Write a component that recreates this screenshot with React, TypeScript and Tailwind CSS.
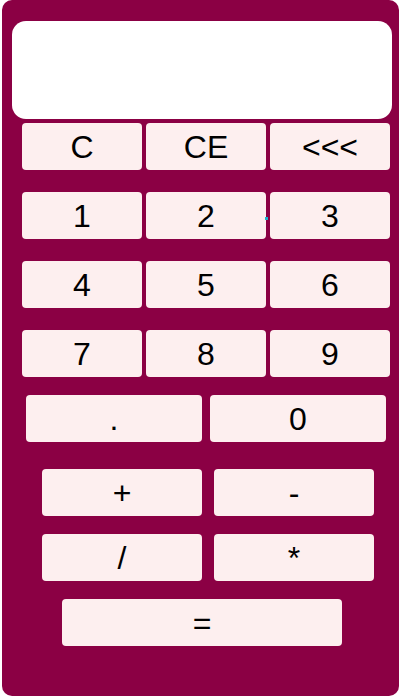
const rows: { keys: string[]; w: string; gap: string; ml: string; mt: string }[] = [
  { keys: ["C", "CE", "<<<"], w: "w-[120px]", gap: "gap-[4px]", ml: "ml-[20px]", mt: "mt-[4px]" },
  { keys: ["1", "2", "3"], w: "w-[120px]", gap: "gap-[4px]", ml: "ml-[20px]", mt: "mt-[22px]" },
  { keys: ["4", "5", "6"], w: "w-[120px]", gap: "gap-[4px]", ml: "ml-[20px]", mt: "mt-[22px]" },
  { keys: ["7", "8", "9"], w: "w-[120px]", gap: "gap-[4px]", ml: "ml-[20px]", mt: "mt-[22px]" },
  { keys: [".", "0"], w: "w-[176px]", gap: "gap-[8px]", ml: "ml-[24px]", mt: "mt-[18px]" },
  { keys: ["+", "-"], w: "w-[160px]", gap: "gap-[12px]", ml: "ml-[40px]", mt: "mt-[27px]" },
  { keys: ["/", "*"], w: "w-[160px]", gap: "gap-[12px]", ml: "ml-[40px]", mt: "mt-[18px]" },
  { keys: ["="], w: "w-[280px]", gap: "gap-0", ml: "ml-[60px]", mt: "mt-[18px]" },
];

export default function App() {
  return (
    <div className="w-[400px] h-[697px] bg-white font-['Liberation_Sans',Arial,sans-serif]">
      <div className="relative ml-[2px] w-[397px] h-[696px] rounded-[10px] bg-[#8b0044] flex flex-col">
        <div className="mt-[21px] ml-[10px] w-[380px] h-[98px] rounded-[14px] bg-white" />
        {rows.map((row, i) => (
          <div key={i} className={`flex ${row.gap} ${row.ml} ${row.mt}`}>
            {row.keys.map((k) => (
              <button
                key={k}
                className={`${row.w} h-[47px] rounded-[4px] bg-[#fdefef] text-black text-[32px] leading-none flex items-center justify-center`}
              >
                {k}
              </button>
            ))}
          </div>
        ))}
        {/* caret marker */}
        <span className="absolute left-[263px] top-[217px] w-[3px] h-[3px] bg-[#1bb4cf]" />
      </div>
    </div>
  );
}
